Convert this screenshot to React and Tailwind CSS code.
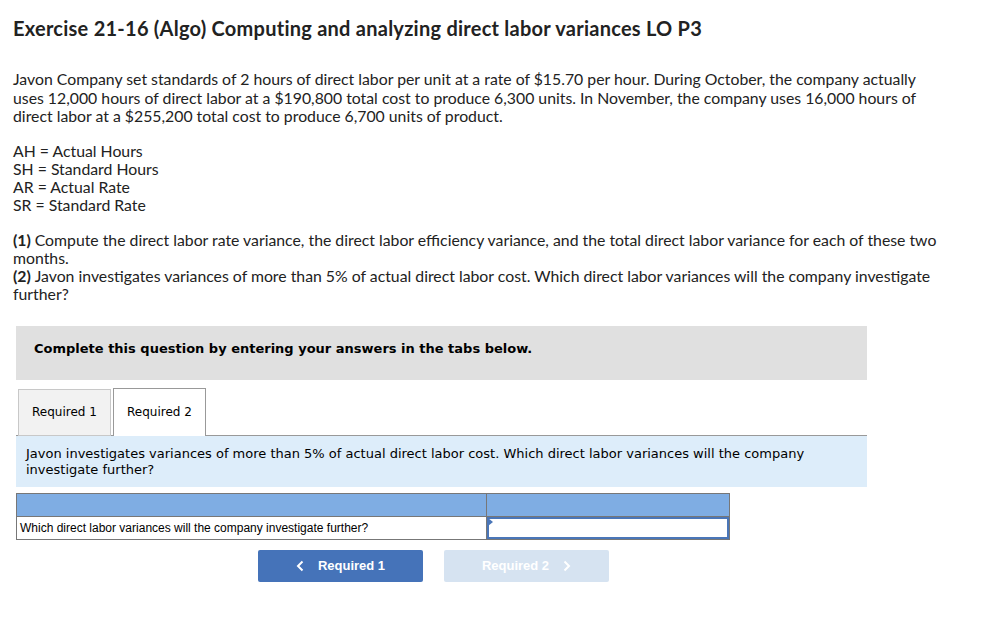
import React from 'react';

const body = { fontFamily: 'Lato, "Open Sans", sans-serif' };
const verdana = { fontFamily: '"DejaVu Sans", Verdana, sans-serif' };
const arial = { fontFamily: '"Liberation Sans", Arial, sans-serif' };

const App = () => {
  return (
    <div className="min-h-screen bg-white text-[#222]" style={body}>
      <div className="pl-[13px] pr-4 pt-[16px]">
        <h1 className="text-[20px] font-bold leading-[24px] tracking-[0.25px] text-[#222]">
          Exercise 21-16 (Algo) Computing and analyzing direct labor variances LO P3
        </h1>

        <p className="mt-[30px] w-[935px] text-[15.8px] leading-[18.5px]">
          Javon Company set standards of 2 hours of direct labor per unit at a rate of $15.70 per hour. During October, the company actually uses 12,000 hours of direct labor at a $190,800 total cost to produce 6,300 units. In November, the company uses 16,000 hours of direct labor at a $255,200 total cost to produce 6,700 units of product.
        </p>

        {/* symbols */}
        <div className="mt-[16px] text-[15.8px] leading-[18px]">
          <div>AH = Actual Hours</div>
          <div>SH = Standard Hours</div>
          <div>AR = Actual Rate</div>
          <div>SR = Standard Rate</div>
        </div>

        <div className="mt-[17px] w-[940px] text-[15.8px] leading-[18px]">
          <p>
            <span className="font-bold">(1) </span>Compute the direct labor rate variance, the direct labor efficiency variance, and the total direct labor variance for each of these two months.
          </p>
          <p>
            <span className="font-bold">(2) </span>Javon investigates variances of more than 5% of actual direct labor cost. Which direct labor variances will the company investigate further?
          </p>
        </div>
      </div>

      <div className="ml-[16px] mt-[23px] w-[851px]">
        <div className="flex h-[54px] items-center bg-[#e0e0e0] pb-[8px] pl-[18px] text-[13px] font-bold text-black" style={verdana}>
          Complete this question by entering your answers in the tabs below.
        </div>

        {/* tabs */}
        <div className="mt-[8px] flex items-end border-b border-[#999] pl-[2px]" style={verdana}>
          <div className="-mb-px flex h-[47px] w-[93px] items-center justify-center border border-[#c8c8c8] bg-[#f2f2f2] text-[12px] text-black">
            Required 1
          </div>
          <div className="-mb-px ml-[2px] flex h-[48px] w-[93px] items-center justify-center border border-b-0 border-[#999] bg-white pb-px text-[12px] text-black">
            Required 2
          </div>
        </div>

        <div className="bg-[#ddedfa] px-[10px] pb-[9px] pt-[10px] pr-[40px] text-[13px] leading-[16px] text-black" style={verdana}>
          Javon investigates variances of more than 5% of actual direct labor cost. Which direct labor variances will the company investigate further?
        </div>

        <div className="mt-[6px] w-[714px] text-[12px] text-black" style={arial}>
          <div className="grid grid-cols-[470px_1fr] border border-[#777]">
            <div className="h-[22px] border-r border-[#777] bg-[#7fade3]" />
            <div className="h-[22px] bg-[#7fade3]" />
            <div className="flex h-[23px] items-center border-r border-t border-[#777] pl-[3px]">
              Which direct labor variances will the company investigate further?
            </div>
            <div className="relative h-[23px] border-t border-[#777] bg-white">
              <div className="absolute inset-0 border-2 border-[#4a76b8]" />
              <div className="absolute left-[1px] top-[1px] h-0 w-0 border-b-[4px] border-l-[5px] border-t-[4px] border-b-transparent border-l-[#4a76b8] border-t-transparent" />
            </div>
          </div>
        </div>

        <div className="mt-[10px] flex gap-[21px] pl-[242px]" style={arial}>
          <button className="flex h-[32px] w-[165px] items-center justify-center gap-[14px] rounded-[2px] bg-[#4573b9] text-[13px] font-bold text-white">
            <svg width="8" height="12" viewBox="0 0 8 12" fill="none">
              <path d="M6.5 1.5 2 6l4.5 4.5" stroke="white" strokeWidth="2" />
            </svg>
            Required 1
          </button>
          <button className="flex h-[32px] w-[165px] items-center justify-center gap-[14px] rounded-[2px] bg-[#d6e3f1] text-[13px] font-bold text-white">
            Required 2
            <svg width="8" height="12" viewBox="0 0 8 12" fill="none">
              <path d="M1.5 1.5 6 6l-4.5 4.5" stroke="white" strokeWidth="2" />
            </svg>
          </button>
        </div>
      </div>
    </div>
  );
};

export default App;
